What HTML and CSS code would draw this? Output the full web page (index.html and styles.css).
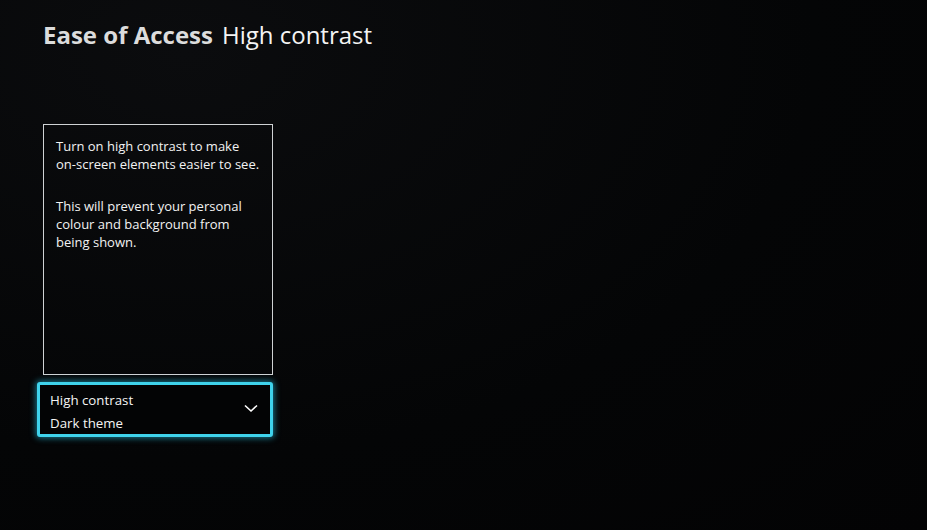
FILE: index.html
```html
<!DOCTYPE html>
<html lang="en">
  <head>
    <meta charset="UTF-8" />
    <meta name="viewport" content="width=device-width, initial-scale=1.0" />
    <title>High contrast</title>
    <link rel="stylesheet" href="styles.css">
  </head>
  <body>
    <h1 class="title">
      <span class="section">Ease of Access</span>
      <span class="page">High contrast</span>
    </h1>
    <div class="panel">
      <div class="info">
        <p>Turn on high contrast to make <span class="nowrap">on-screen</span> elements easier to see.</p>
        <p>This will prevent your personal colour and background from being shown.</p>
      </div>
      <button class="select" type="button">
        <span class="select-text">
          <span class="select-label">High contrast</span>
          <span class="select-value">Dark theme</span>
        </span>
        <svg class="chevron" width="14" height="9" viewBox="0 0 14 9">
          <path d="M1 1.5 L7 7 L13 1.5" fill="none" stroke="#fff" stroke-width="1.6" />
        </svg>
      </button>
    </div>
  </body>
</html>
```

FILE: styles.css
```css
html,
body {
  height: 100%;
}

body {
  margin: 0;
  padding: 19px 0 0 43px;
  box-sizing: border-box;
  background: radial-gradient(ellipse at 20% 10%, #0b0c0e 0%, #040506 60%, #030304 100%);
  color: #fff;
  font-family: "Open Sans", "Noto Sans", sans-serif;
}

.title {
  margin: 0;
  font-size: 24px;
  line-height: 32px;
  font-weight: 400;
  display: flex;
  gap: 9px;
}

.section {
  font-weight: 700;
  color: #dcdcdc;
}

.page {
  color: #f4f4f4;
}

.panel {
  margin-top: 73px;
  width: 235px;
  display: flex;
  flex-direction: column;
}

.info {
  width: 230px;
  height: 251px;
  box-sizing: border-box;
  border: 1px solid #cfd2d4;
  padding: 12px 10px 12px 12px;
  font-size: 13px;
  line-height: 18px;
  color: #f2f2f2;
}

.info p {
  margin: 0 0 24px;
}

.nowrap {
  white-space: nowrap;
}

.select {
  margin: 7px 0 0 -6px;
  width: 236px;
  height: 55px;
  box-sizing: border-box;
  border: 3px solid #3fd3ec;
  border-radius: 3px;
  background: #030405;
  box-shadow: 0 0 6px 1px rgba(40, 200, 235, 0.6);
  display: flex;
  align-items: center;
  padding: 3px 12px 0 10px;
  font-family: inherit;
  color: #f4f4f4;
  text-align: left;
}

.select-text {
  flex: 1;
  display: flex;
  flex-direction: column;
  gap: 5px;
  font-size: 13.3px;
  line-height: 18px;
}

.chevron {
  margin-top: -6px;
}
```
